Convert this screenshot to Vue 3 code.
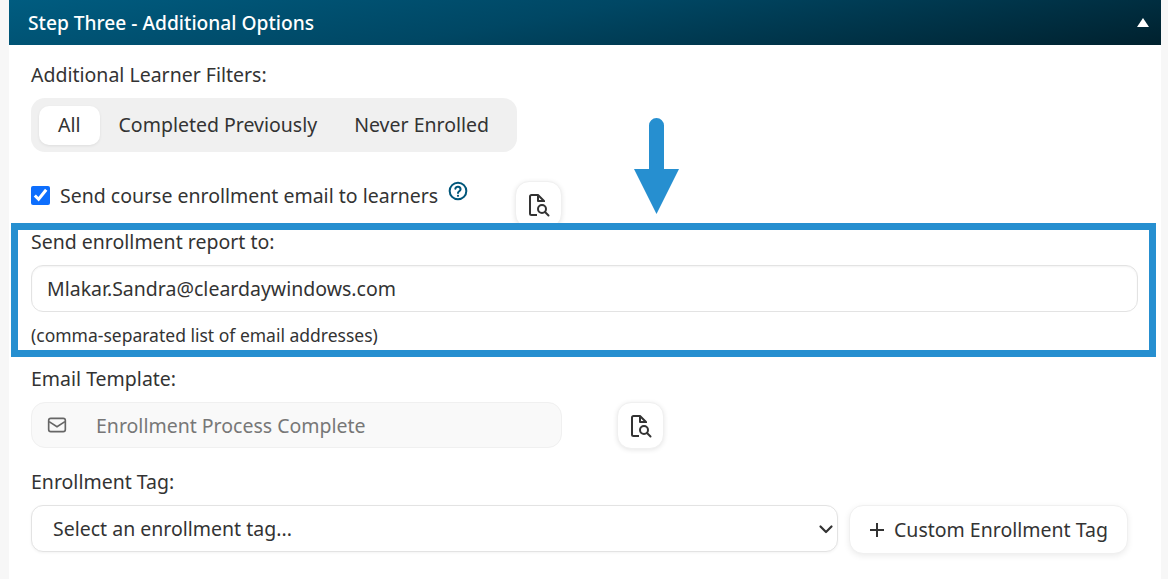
<template>
  <div class="page">
    <section class="panel">
      <header class="panel-header">
        <span>Step Three - Additional Options</span>
        <span class="caret"></span>
      </header>

      <div class="panel-body">
        <label class="field-label">Additional Learner Filters:</label>
        <div class="segments">
          <button
            v-for="filter in filters"
            :key="filter"
            class="segment"
            :class="{ active: filter === selectedFilter }"
            @click="selectedFilter = filter"
          >{{ filter }}</button>
        </div>

        <div class="send-row">
          <input id="send-email" v-model="sendEmail" type="checkbox" class="check" />
          <label for="send-email" class="send-label">Send course enrollment email to learners</label>
          <svg class="help" viewBox="0 0 24 24" fill="none" stroke="#00567a" stroke-width="2.4">
            <circle cx="12" cy="12" r="10" />
            <path d="M8.8 9.4a3.2 3.2 0 0 1 6.3.6c0 2.2-3.1 2.5-3.1 4.4" stroke-linecap="round" />
            <circle cx="12" cy="17.8" r="1.3" fill="#00567a" stroke="none" />
          </svg>
          <button class="icon-button send-preview">
            <svg viewBox="0 0 24 24" fill="none" stroke="#333" stroke-width="2">
              <path d="M11 22H5.500A1.500 1.500 0 0 1 4 20.500V3.500A1.500 1.500 0 0 1 5.500 2H12l6 6v1" stroke-linejoin="round" />
              <path d="M12 2v6h6" stroke-linejoin="round" />
              <circle cx="16" cy="16" r="4" />
              <path d="M19 19l3.500 3.500" stroke-linecap="round" />
            </svg>
          </button>
        </div>

        <div class="highlight">
          <label class="field-label">Send enrollment report to:</label>
          <input v-model="reportEmail" type="text" class="text-input" />
          <p class="hint">(comma-separated list of email addresses)</p>
        </div>

        <label class="field-label template-label">Email Template:</label>
        <div class="template-row">
          <div class="template-field">
            <svg viewBox="0 0 24 24" fill="none" stroke="#666" stroke-width="2">
              <rect x="2" y="4" width="20" height="16" rx="2.500" />
              <path d="M2.500 8l9.500 6 9.500-6" />
            </svg>
            <span>Enrollment Process Complete</span>
          </div>
          <button class="icon-button">
            <svg viewBox="0 0 24 24" fill="none" stroke="#333" stroke-width="2">
              <path d="M11 22H5.500A1.500 1.500 0 0 1 4 20.500V3.500A1.500 1.500 0 0 1 5.500 2H12l6 6v1" stroke-linejoin="round" />
              <path d="M12 2v6h6" stroke-linejoin="round" />
              <circle cx="16" cy="16" r="4" />
              <path d="M19 19l3.500 3.500" stroke-linecap="round" />
            </svg>
          </button>
        </div>

        <label class="field-label tag-label">Enrollment Tag:</label>
        <div class="tag-row">
          <div class="select-wrap">
            <select class="tag-select">
              <option>Select an enrollment tag...</option>
            </select>
            <svg class="chevron" viewBox="0 0 16 16" fill="none" stroke="#333" stroke-width="2.200">
              <path d="M2.500 5.500L8 11l5.500-5.500" stroke-linecap="round" stroke-linejoin="round" />
            </svg>
          </div>
          <button class="custom-tag">
            <svg viewBox="0 0 16 16" fill="none" stroke="#333" stroke-width="2">
              <path d="M8 1v14M1 8h14" />
            </svg>
            Custom Enrollment Tag
          </button>
        </div>
      </div>

      <svg class="arrow" viewBox="0 0 45 96">
        <path d="M15 51V7.500a7.500 7.500 0 0 1 15 0V51h15L22.500 96 0 51z" fill="#268fd0" />
      </svg>
    </section>
  </div>
</template>

<script setup>
import { ref } from 'vue'

const filters = ['All', 'Completed Previously', 'Never Enrolled']
const selectedFilter = ref('All')
const sendEmail = ref(true)
const reportEmail = ref('Mlakar.Sandra@cleardaywindows.com')
</script>

<style>
html, body {
  margin: 0;
  background: #f7f7f7;
}
</style>

<style scoped>
.page {
  height: 579px;
  overflow: hidden;
  padding: 0 7px 0 9px;
  box-sizing: border-box;
  font-family: "Noto Sans", "Open Sans", sans-serif;
  color: #333;
}

.panel {
  position: relative;
  height: 100%;
  background: #fff;
}

.panel-header {
  display: flex;
  align-items: center;
  justify-content: space-between;
  height: 45px;
  padding: 0 12px 0 19px;
  color: #fff;
  font-size: 19.2px;
  font-weight: 500;
  background: linear-gradient(170deg, #005c80 0%, #004764 45%, #00212e 100%);
}

.caret {
  width: 0;
  height: 0;
  border-left: 6px solid transparent;
  border-right: 6px solid transparent;
  border-bottom: 9px solid #fff;
}

.panel-body {
  padding: 17px 23px 0 22px;
}

.field-label {
  display: block;
  font-size: 19.5px;
  line-height: 26px;
}

.segments {
  display: flex;
  align-items: center;
  width: 486px;
  height: 54px;
  margin-top: 10px;
  padding: 0 8px;
  box-sizing: border-box;
  background: #f0f0f0;
  border-radius: 14px;
}

.segment {
  height: 39px;
  padding: 0 19px 2px;
  border: 0;
  border-radius: 10px;
  background: transparent;
  color: #333;
  font: inherit;
  font-size: 19.5px;
  white-space: nowrap;
}

.segment.active {
  background: #fff;
  box-shadow: 0 1px 3px rgba(0, 0, 0, 0.08);
}

.segment + .segment + .segment {
  margin-left: -1px;
}

.send-row {
  display: flex;
  align-items: flex-start;
  height: 41px;
  margin-top: 30px;
}

.check {
  width: 19px;
  height: 19px;
  margin: 4px 0 0;
  accent-color: #0d6efd;
}

.send-label {
  margin-left: 10px;
  font-size: 19.5px;
  line-height: 28px;
}

.help {
  width: 20px;
  height: 20px;
  margin-left: 10px;
  margin-top: -1px;
}

.icon-button {
  display: flex;
  align-items: center;
  justify-content: center;
  width: 47px;
  height: 47px;
  padding: 0 2px 0 0;
  border: 1px solid #f0f0f0;
  border-radius: 14px;
  background: #fff;
  box-shadow: 0 1px 5px rgba(0, 0, 0, 0.1);
}

.icon-button svg {
  width: 24px;
  height: 24px;
}

.send-preview {
  margin-left: 47px;
  margin-top: -1px;
}

.highlight {
  position: relative;
  width: 1145px;
  height: 134px;
  margin-left: -20px;
  padding-left: 13px;
  box-sizing: border-box;
  border: 7px solid #268fd0;
  background: #fff;
}

.highlight .field-label {
  line-height: 23px;
}

.text-input {
  display: block;
  width: 1107px;
  height: 47px;
  margin-top: 12px;
  padding: 0 15px;
  box-sizing: border-box;
  border: 1px solid #e3e3e3;
  border-radius: 12px;
  color: #333;
  font: inherit;
  font-size: 19.5px;
  box-shadow: inset 0 1px 2px rgba(0, 0, 0, 0.05);
}

.hint {
  margin: 11px 0 0;
  font-size: 17.5px;
  line-height: 24px;
}

.template-label {
  margin-top: 9px;
}

.template-row {
  display: flex;
  align-items: flex-start;
  gap: 55px;
  margin-top: 10px;
}

.template-field {
  display: flex;
  align-items: center;
  width: 531px;
  height: 46px;
  box-sizing: border-box;
  padding-left: 15px;
  background: #f9f9f9;
  border: 1px solid #f0f0f0;
  border-radius: 14px;
  color: #777;
  font-size: 19.5px;
}

.template-field svg {
  width: 20px;
  height: 20px;
  margin-right: 29px;
}

.tag-label {
  margin-top: 20px;
}

.tag-row {
  display: flex;
  align-items: flex-start;
  gap: 11px;
  margin-top: 10px;
}

.select-wrap {
  position: relative;
  width: 807px;
}

.tag-select {
  display: block;
  width: 100%;
  height: 47px;
  padding: 0 21px;
  box-sizing: border-box;
  appearance: none;
  border: 1px solid #e3e3e3;
  border-radius: 12px;
  background: #fff;
  color: #333;
  font: inherit;
  font-size: 19.5px;
  box-shadow: 0 1px 3px rgba(0, 0, 0, 0.05);
}

.chevron {
  position: absolute;
  right: 4px;
  top: 16px;
  width: 16px;
  height: 16px;
  pointer-events: none;
}

.custom-tag {
  display: flex;
  align-items: center;
  gap: 9px;
  width: 279px;
  height: 49px;
  padding: 0 0 0 19px;
  border: 1px solid #f0f0f0;
  border-radius: 14px;
  background: #fff;
  color: #333;
  font: inherit;
  font-size: 19.5px;
  white-space: nowrap;
  box-shadow: 0 2px 6px rgba(0, 0, 0, 0.08);
}

.custom-tag svg {
  width: 16px;
  height: 16px;
}

.arrow {
  position: absolute;
  left: 625px;
  top: 118px;
  width: 45px;
  height: 96px;
}
</style>
